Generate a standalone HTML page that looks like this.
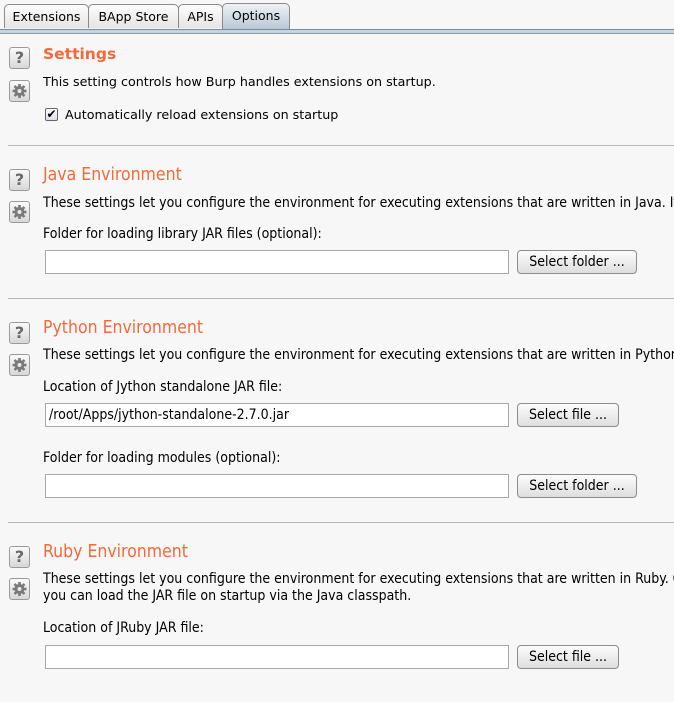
<!DOCTYPE html>
<html><head><meta charset="utf-8"><style>
body{margin:0;width:674px;height:702px;background:#f7f7f7;position:relative;overflow:hidden;font-family:"DejaVu Sans","Liberation Sans",sans-serif;font-size:12px;color:#000}
.a{position:absolute;white-space:nowrap}
.c{font-stretch:condensed;font-family:"DejaVu Sans Condensed","DejaVu Sans",sans-serif;font-size:14px}
.tab{position:absolute;top:4px;height:24px;border:1px solid #8a8a8a;border-bottom:none;border-radius:5px 5px 0 0;background:linear-gradient(#fdfdfd,#e4e4e4);font-size:12.5px;line-height:24px;text-align:center;box-sizing:border-box}
.sel{background:linear-gradient(#eef2f6,#b9c8d6);top:3px;height:26px}
.t{color:#f26a3a;font-weight:bold;font-size:15.5px}
.tc{color:#f26a3a;font-size:17.5px !important}
.ic{position:absolute;left:9px;width:21px;height:22px;border:1px solid #9a9a9a;border-radius:3px;background:linear-gradient(#fafafa,#d8d8d8);box-sizing:border-box;text-align:center;color:#6a6a6a;font-weight:bold;font-size:16px;line-height:20px}
.sep{position:absolute;left:8px;right:0;height:1px;background:#b8b8b8}
.in{position:absolute;left:45px;width:464px;height:24px;border:1px solid #a8a8a8;background:#fff;box-sizing:border-box;padding-left:3px;line-height:22px}
.bt{position:absolute;left:517px;height:24px;border:1px solid #8d8d8d;border-radius:4px;background:linear-gradient(#fcfcfc,#dedede);box-sizing:border-box;text-align:center;line-height:23px}
</style></head><body>
<div class="tab" style="left:4px;width:85px">Extensions</div>
<div class="tab" style="left:88px;width:91px">BApp Store</div>
<div class="tab" style="left:178px;width:45px">APIs</div>
<div class="tab sel" style="left:222px;width:68px">Options</div>
<div class="a" style="left:0;right:0;top:29px;height:1px;background:#7a8a9a"></div>
<div class="a" style="left:0;right:0;top:30px;height:3px;background:#c8d4de"></div>
<div class="a" style="left:0;right:0;top:33px;height:1px;background:#8a9aaa"></div>

<svg width="0" height="0" style="position:absolute"><defs><g id="g"><circle cx="0" cy="0" r="5" fill="#7a7a7a"/><g stroke="#7a7a7a" stroke-width="2.6"><line x1="0" y1="-7" x2="0" y2="7"/><line x1="-7" y1="0" x2="7" y2="0"/><line x1="-5" y1="-5" x2="5" y2="5"/><line x1="-5" y1="5" x2="5" y2="-5"/></g><circle r="2" fill="#e8e8e8"/></g></defs></svg>

<div class="ic" style="top:47px">?</div>
<div class="ic" style="top:80px"><svg width="19" height="20"><use href="#g" x="9.5" y="10"/></svg></div>
<div class="a t" style="left:43px;top:45px">Settings</div>
<div class="a" style="left:43px;top:74px;font-size:12.7px">This setting controls how Burp handles extensions on startup.</div>
<div class="a" style="left:45px;top:108px;width:13px;height:13px;border:1px solid #666;border-radius:2px;background:linear-gradient(#fff,#dde);box-sizing:border-box;font-size:12px;line-height:11px;text-align:center">✔</div>
<div class="a" style="left:65px;top:107px;font-size:12.7px">Automatically reload extensions on startup</div>
<div class="sep" style="top:145px"></div>

<div class="ic" style="top:169px">?</div>
<div class="ic" style="top:201px"><svg width="19" height="20"><use href="#g" x="9.5" y="10"/></svg></div>
<div class="a tc c" style="left:43px;top:165px">Java Environment</div>
<div class="a c" style="left:43px;top:195px">These settings let you configure the environment for executing extensions that are written in Java. If</div>
<div class="a c" style="left:43px;top:226px">Folder for loading library JAR files (optional):</div>
<div class="in c" style="top:250px"></div>
<div class="bt c" style="top:250px;width:120px">Select folder ...</div>
<div class="sep" style="top:298px"></div>

<div class="ic" style="top:322px">?</div>
<div class="ic" style="top:354px"><svg width="19" height="20"><use href="#g" x="9.5" y="10"/></svg></div>
<div class="a tc c" style="left:43px;top:318px">Python Environment</div>
<div class="a c" style="left:43px;top:347px">These settings let you configure the environment for executing extensions that are written in Python</div>
<div class="a c" style="left:43px;top:379px">Location of Jython standalone JAR file:</div>
<div class="in c" style="top:403px">/root/Apps/jython-standalone-2.7.0.jar</div>
<div class="bt c" style="top:403px;width:102px">Select file ...</div>
<div class="a c" style="left:43px;top:450px">Folder for loading modules (optional):</div>
<div class="in c" style="top:474px"></div>
<div class="bt c" style="top:474px;width:120px">Select folder ...</div>
<div class="sep" style="top:522px"></div>

<div class="ic" style="top:546px">?</div>
<div class="ic" style="top:578px"><svg width="19" height="20"><use href="#g" x="9.5" y="10"/></svg></div>
<div class="a tc c" style="left:43px;top:542px">Ruby Environment</div>
<div class="a c" style="left:43px;top:571px">These settings let you configure the environment for executing extensions that are written in Ruby. O</div>
<div class="a c" style="left:43px;top:588px">you can load the JAR file on startup via the Java classpath.</div>
<div class="a c" style="left:43px;top:620px">Location of JRuby JAR file:</div>
<div class="in c" style="top:645px"></div>
<div class="bt c" style="top:645px;width:102px">Select file ...</div>
</body></html>
